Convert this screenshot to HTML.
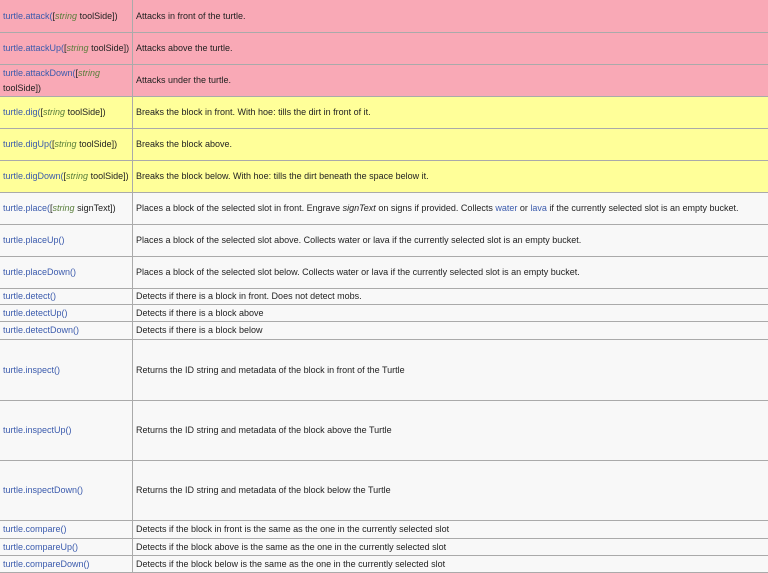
<!DOCTYPE html>
<html><head><meta charset="utf-8"><style>
html,body{margin:0;padding:0;background:#f8f9fa;}
body{width:768px;height:571px;overflow:hidden;font-family:"Liberation Sans",Arial,sans-serif;font-size:9px;color:#222;}
table{border-collapse:collapse;position:absolute;left:-1px;top:-1px;width:780px;}
td{border:1px solid #aaa;padding:0 0 0 3px;vertical-align:middle;line-height:15px;}
td.f{width:129px;}
a{color:#3b5bad;text-decoration:none;}
i{color:#587d3a;}
tr.r td{background:#f9a9b6;}
tr.y td{background:#ffff99;}
tr.g td{background:#f8f8f8;}
</style></head><body>
<table>
<tr class="r" style="height:33px"><td class="f"><a>turtle.attack(</a>[<i>string</i> toolSide])</td><td>Attacks in front of the turtle.</td></tr>
<tr class="r" style="height:32px"><td class="f"><a>turtle.attackUp(</a>[<i>string</i> toolSide])</td><td>Attacks above the turtle.</td></tr>
<tr class="r" style="height:32px"><td class="f"><a>turtle.attackDown(</a>[<i>string</i> toolSide])</td><td>Attacks under the turtle.</td></tr>
<tr class="y" style="height:32px"><td class="f"><a>turtle.dig(</a>[<i>string</i> toolSide])</td><td>Breaks the block in front. With hoe: tills the dirt in front of it.</td></tr>
<tr class="y" style="height:32px"><td class="f"><a>turtle.digUp(</a>[<i>string</i> toolSide])</td><td>Breaks the block above.</td></tr>
<tr class="y" style="height:32px"><td class="f"><a>turtle.digDown(</a>[<i>string</i> toolSide])</td><td>Breaks the block below. With hoe: tills the dirt beneath the space below it.</td></tr>
<tr class="g" style="height:32px"><td class="f"><a>turtle.place(</a>[<i>string</i> signText])</td><td>Places a block of the selected slot in front. Engrave <i style="color:#222">signText</i> on signs if provided. Collects <a>water</a> or <a>lava</a> if the currently selected slot is an empty bucket.</td></tr>
<tr class="g" style="height:32px"><td class="f"><a>turtle.placeUp()</a></td><td>Places a block of the selected slot above. Collects water or lava if the currently selected slot is an empty bucket.</td></tr>
<tr class="g" style="height:32px"><td class="f"><a>turtle.placeDown()</a></td><td>Places a block of the selected slot below. Collects water or lava if the currently selected slot is an empty bucket.</td></tr>
<tr class="g" style="height:16px"><td class="f"><a>turtle.detect()</a></td><td>Detects if there is a block in front. Does not detect mobs.</td></tr>
<tr class="g" style="height:17px"><td class="f"><a>turtle.detectUp()</a></td><td>Detects if there is a block above</td></tr>
<tr class="g" style="height:18px"><td class="f"><a>turtle.detectDown()</a></td><td>Detects if there is a block below</td></tr>
<tr class="g" style="height:61px"><td class="f"><a>turtle.inspect()</a></td><td>Returns the ID string and metadata of the block in front of the Turtle</td></tr>
<tr class="g" style="height:60px"><td class="f"><a>turtle.inspectUp()</a></td><td>Returns the ID string and metadata of the block above the Turtle</td></tr>
<tr class="g" style="height:60px"><td class="f"><a>turtle.inspectDown()</a></td><td>Returns the ID string and metadata of the block below the Turtle</td></tr>
<tr class="g" style="height:18px"><td class="f"><a>turtle.compare()</a></td><td>Detects if the block in front is the same as the one in the currently selected slot</td></tr>
<tr class="g" style="height:17px"><td class="f"><a>turtle.compareUp()</a></td><td>Detects if the block above is the same as the one in the currently selected slot</td></tr>
<tr class="g" style="height:17px"><td class="f"><a>turtle.compareDown()</a></td><td>Detects if the block below is the same as the one in the currently selected slot</td></tr>
</table>
</body></html>
